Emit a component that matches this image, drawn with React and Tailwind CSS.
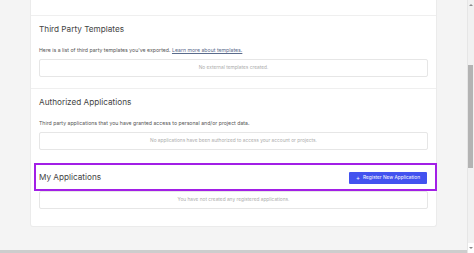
function EmptyBox({ children }) {
  return (
    <div className="flex h-[18px] items-center justify-center rounded-[2px] border border-[#e6e6e6] bg-white text-[4.8px] text-[#acacac]">
      {children}
    </div>
  )
}

function Scrollbar() {
  return (
    <div className="flex w-[7px] flex-col border-l border-[#e6e6e6] bg-[#f1f1f1]">
      <div className="flex h-[10px] items-center justify-center">
        <div className="h-0 w-0 border-x-[2px] border-b-[2px] border-x-transparent border-b-[#8a8a8a]" />
      </div>
      <div className="h-[55px]" />
      <div className="h-[103px] w-[5px] bg-[#b3b3b3]" />
      <div className="flex-1" />
      <div className="flex h-[10px] items-center justify-center bg-white">
        <div className="h-0 w-0 border-x-[2px] border-t-[2px] border-x-transparent border-t-[#8a8a8a]" />
      </div>
    </div>
  )
}

export default function App() {
  return (
    <div
      className="flex h-[253px] w-[474px] overflow-hidden bg-[#f4f4f4]"
      style={{ fontFamily: "Inter, 'Liberation Sans', sans-serif" }}
    >
      <div className="flex flex-1 flex-col">
        <div className="flex-1 px-[30px]">
          <div className="rounded-b-[3px] border border-t-0 border-[#ebebeb] bg-white">
            <div className="h-[16px] border-b border-[#efefef]" />

            <div className="border-b border-[#efefef] px-[8px] pt-[7px] pb-[11px]">
              <h2 className="text-[8.2px] leading-[12px] text-[#444]">
                Third Party Templates
              </h2>
              <p className="mt-[11px] text-[5.2px] leading-[8px] text-[#555]">
                Here is a list of third party templates you've exported.{" "}
                <span className="text-[#5a6b8c] underline">
                  Learn more about templates.
                </span>
              </p>
              <div className="mt-[5px]">
                <EmptyBox>No external templates created.</EmptyBox>
              </div>
            </div>

            <div className="px-[8px] pt-[7px] pb-[13px]">
              <h2 className="text-[8.2px] leading-[12px] text-[#444]">
                Authorized Applications
              </h2>
              <p className="mt-[11px] text-[5.2px] leading-[8px] text-[#555]">
                Third party applications that you have granted access to personal
                and/or project data.
              </p>
              <div className="mt-[5px]">
                <EmptyBox>
                  No applications have been authorized to access your account or
                  projects.
                </EmptyBox>
              </div>
            </div>

            <div className="px-[8px] pb-[17px]">
              <div className="relative flex h-[28px] items-center justify-between">
                <h2 className="text-[8.2px] leading-[12px] text-[#444]">
                  My Applications
                </h2>
                <button className="mr-[1px] mt-[2px] flex h-[12px] w-[78px] items-center justify-center gap-[3px] rounded-[1px] bg-[#4252ef] text-[4.8px] text-white">
                  <span className="text-[6px] leading-none">+</span>
                  Register New Application
                </button>
                <div className="pointer-events-none absolute -left-[5px] -right-[9px] top-0 bottom-0 border-2 border-[#a21fe6]" />
              </div>
              <EmptyBox>You have not created any registered applications.</EmptyBox>
            </div>
          </div>
        </div>
        <div className="h-[3px] bg-[#cdcdcd]" />
      </div>
      <Scrollbar />
    </div>
  )
}
